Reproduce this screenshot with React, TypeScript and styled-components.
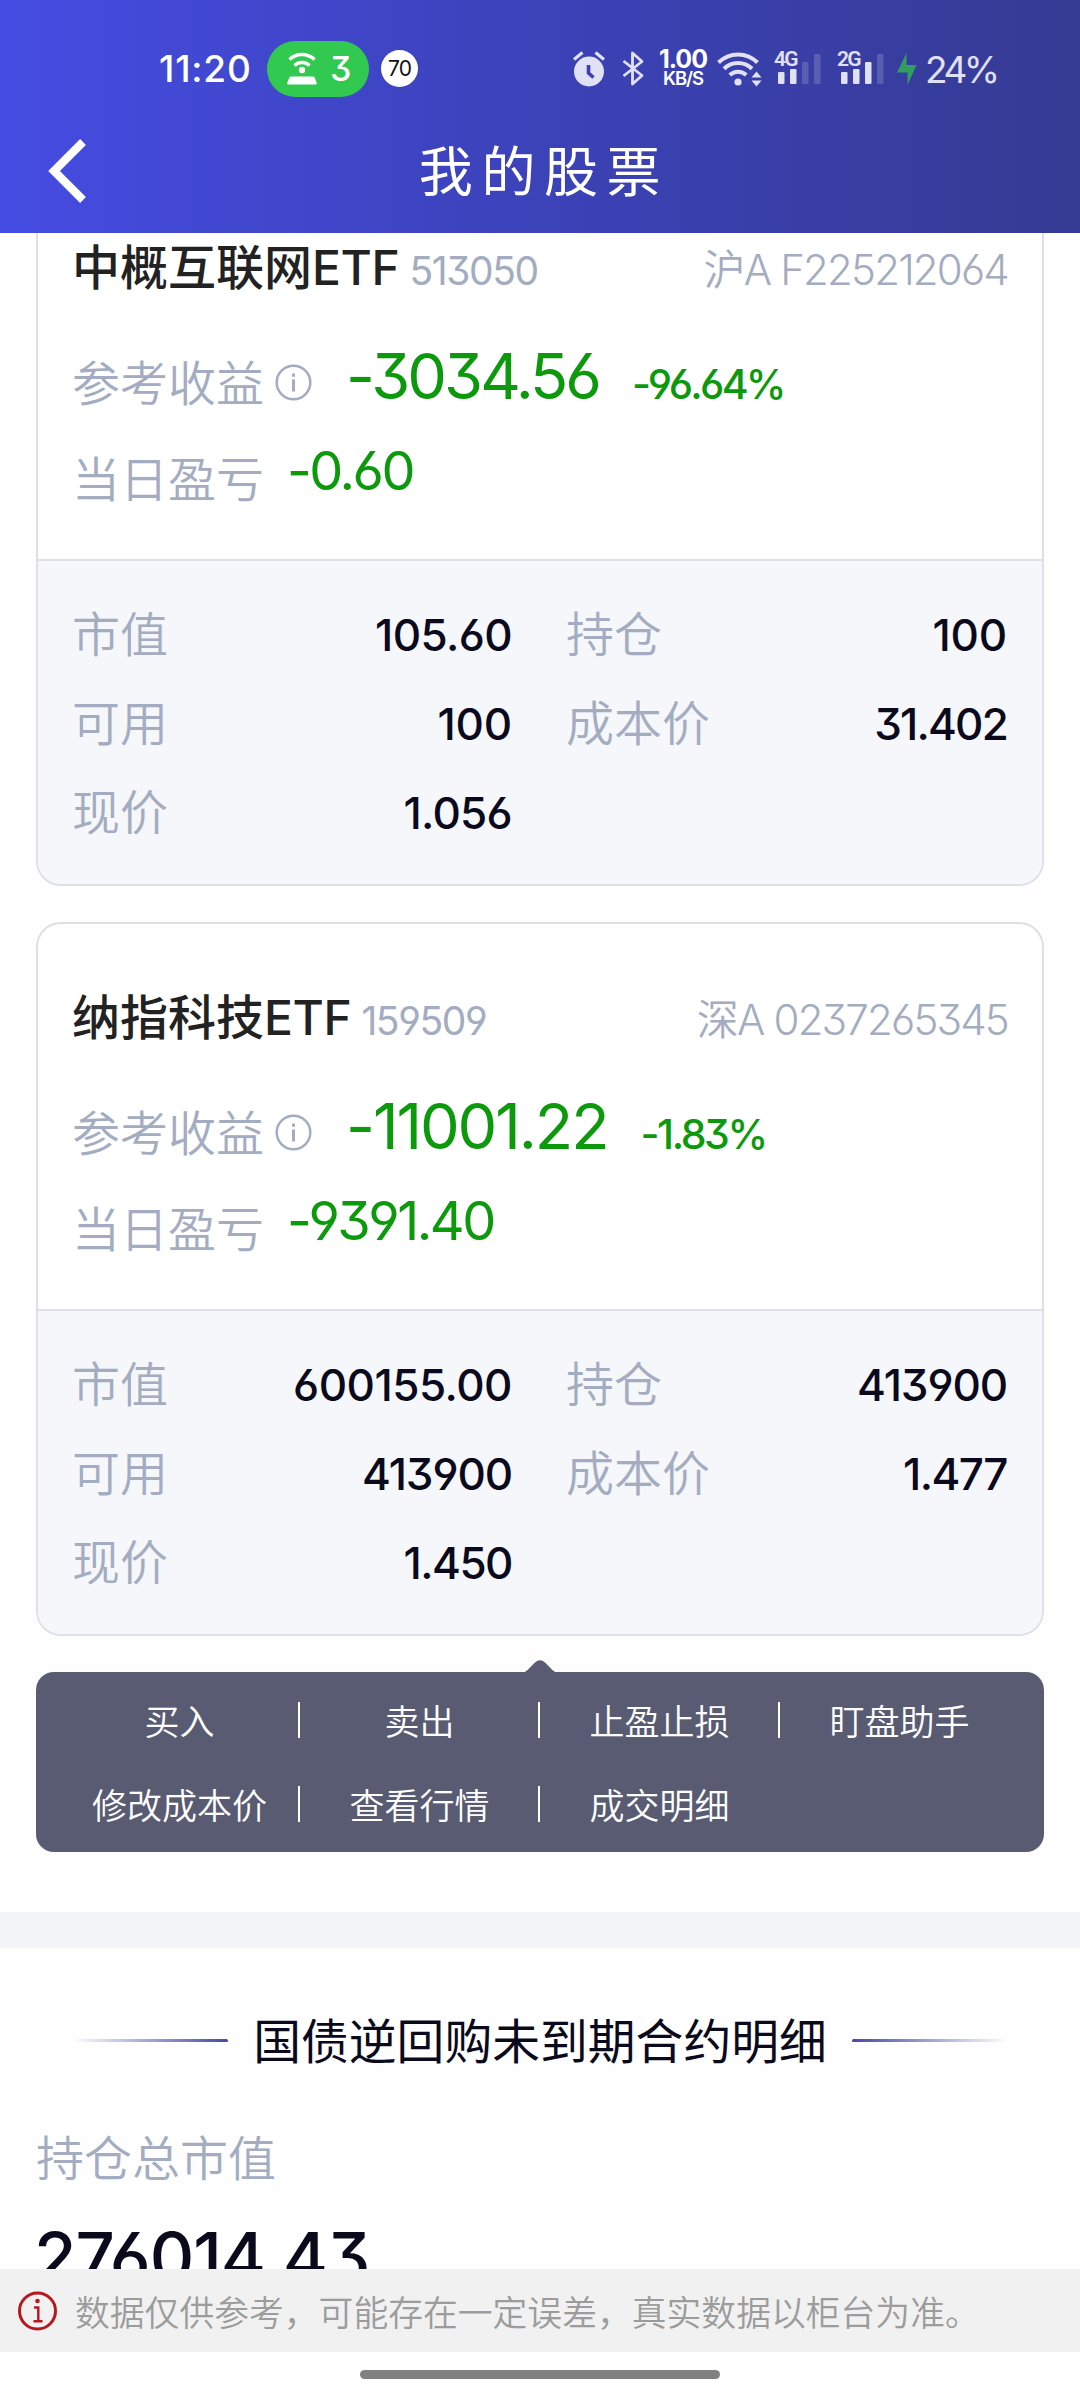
import React from "react";
import styled, { createGlobalStyle } from "styled-components";

const GlobalStyle = createGlobalStyle`
  * { box-sizing: border-box; }
  body { margin: 0; background: #fff; }
`;

const Screen = styled.div`
  width: 1080px;
  height: 2400px;
  display: flex;
  flex-direction: column;
  overflow: hidden;
  background: #fefefe;
  color: #0a0a1c;
  font-family: Inter, "Noto Sans CJK SC", sans-serif;
  font-feature-settings: "cv03", "cv04", "cv09";
  white-space: nowrap;
`;

const Header = styled.header`
  flex: none;
  height: 233px;
  display: flex;
  flex-direction: column;
  background: linear-gradient(90deg, #454ce2 0%, #3c42b8 50%, #353b92 100%);
  color: #fff;
`;

const StatusBar = styled.div`
  height: 137px;
  padding: 0 84px 0 159px;
  display: flex;
  align-items: center;
  justify-content: space-between;
`;

const StatusGroup = styled.div`
  display: flex;
  align-items: center;
  color: #e0e1f5;
`;

const Clock = styled.span`
  width: 108px;
  font-size: 37px;
  font-weight: 500;
  letter-spacing: 0.8px;
  color: #fff;
`;

const HotspotPill = styled.div`
  width: 102px;
  height: 56px;
  border-radius: 28px;
  background: #31c950;
  color: #fff;
  display: flex;
  align-items: center;
  padding-left: 20px;
  gap: 13px;
  font-size: 34px;
  font-weight: 500;
`;

const CountBadge = styled.div`
  width: 37px;
  height: 37px;
  margin-left: 12px;
  border-radius: 50%;
  background: #fff;
  color: #111;
  font-size: 21px;
  letter-spacing: -1px;
  display: flex;
  align-items: center;
  justify-content: center;
`;

const Speed = styled.div`
  width: 50px;
  margin: 0 9px 0 14px;
  color: #fff;
  display: flex;
  flex-direction: column;
  align-items: center;
`;

const SpeedValue = styled.span`
  font-size: 25px;
  font-weight: 650;
  line-height: 20px;
  letter-spacing: -1px;
`;

const SpeedUnit = styled.span`
  font-size: 18.5px;
  font-weight: 600;
  line-height: 19px;
  letter-spacing: -1.1px;
`;

const SignalBox = styled.div`
  position: relative;
  width: 48px;
  height: 34px;
  margin-left: 15px;

  &:first-of-type {
    margin-left: 13px;
  }
`;

const SignalLabel = styled.span`
  position: absolute;
  left: -1px;
  top: -2px;
  font-size: 21px;
  font-weight: 600;
  line-height: 18px;
  letter-spacing: -1.8px;
  font-family: Roboto, sans-serif;
`;

const BoltIcon = styled.svg`
  margin-left: 11px;
`;

const Battery = styled.span`
  font-size: 37px;
  font-weight: 430;
  line-height: 44px;
  letter-spacing: -3.6px;
  margin-left: 8px;
  width: 71px;
  padding-top: 2px;
`;

const TitleBar = styled.div`
  height: 70px;
  display: grid;
  grid-template-columns: 136px 1fr 136px;
  align-items: center;
`;

const BackButton = styled.button`
  border: 0;
  background: none;
  padding: 0 0 0 48px;
  display: flex;
  margin-top: -4px;
`;

const PageTitle = styled.h1`
  margin: 1px 0 0;
  text-align: center;
  font-weight: 430;
  font-size: 54px;
  line-height: 70px;
  letter-spacing: 8.6px;
  text-indent: 8px;
`;

const Scroller = styled.main`
  height: 2036px;
  flex: none;
  overflow: hidden;
  display: flex;
  flex-direction: column;
`;

const CardList = styled.section`
  flex: none;
  margin-top: -61px;
  padding: 0 36px 60px;
  display: flex;
  flex-direction: column;
  gap: 36px;
`;

const Card = styled.article`
  height: 714px;
  border: 2px solid #dde1e7;
  border-radius: 25px;
  overflow: hidden;
  display: flex;
  flex-direction: column;
  background: #fff;
`;

const Summary = styled.div`
  height: 385px;
  padding: 64px 34px 0;
`;

const NameRow = styled.div`
  display: flex;
  align-items: baseline;
  height: 60px;
  line-height: 60px;
`;

const Name = styled.span`
  font-size: 48px;
  font-weight: 500;
  color: #222;
`;

const Latin = styled.span`
  letter-spacing: -0.4px;
`;

const Code = styled.span`
  font-size: 39px;
  letter-spacing: -1.4px;
  margin-left: 10px;
  color: #a3acc0;
`;

const Account = styled.span`
  margin-left: auto;
  font-size: 42px;
  font-weight: 350;
  letter-spacing: -1.8px;
  color: #a3acc0;
`;

const Row = styled.div<{ $gap: number }>`
  display: flex;
  align-items: flex-start;
  height: 60px;
  line-height: 60px;
  margin-top: ${(p) => p.$gap}px;
`;

const Label = styled.span<{ $drop?: number }>`
  font-size: 48px;
  font-weight: 350;
  color: #a3acc0;
  margin-top: ${(p) => p.$drop ?? 0}px;
`;

const InfoMark = styled.svg`
  flex: none;
  margin: 18px 0 0 11px;
`;

const Figures = styled.div`
  display: flex;
  align-items: baseline;
  color: #0c990c;
`;

const Profit = styled.span<{ $tracking: number }>`
  font-size: 63px;
  font-weight: 430;
  letter-spacing: ${(p) => p.$tracking}px;
  margin-left: 34px;
`;

const Percent = styled.span<{ $tracking: number }>`
  font-size: 41px;
  font-weight: 450;
  letter-spacing: ${(p) => p.$tracking}px;
  margin-left: 33px;
`;

const DayProfit = styled.span`
  font-size: 54px;
  font-weight: 430;
  letter-spacing: -2.5px;
  margin-left: 23px;
  color: #0c990c;
`;

const Details = styled.dl`
  flex: 1;
  margin: 0;
  border-top: 2px solid #dde1e7;
  background: #f5f7fb;
  padding: 29px 34px 0;
  display: grid;
  grid-template-columns: 440px 441px;
  grid-auto-rows: 89px;
  column-gap: 54px;
`;

const Detail = styled.div`
  display: flex;
  justify-content: space-between;
  align-items: center;
`;

const DetailLabel = styled(Label)`
  line-height: 60px;
`;

const DetailValue = styled.dd<{ $tracking: number }>`
  margin: 0;
  font-size: 44px;
  font-weight: 450;
  letter-spacing: ${(p) => p.$tracking}px;
`;

const ActionPanel = styled.nav`
  position: relative;
  height: 180px;
  border-radius: 18px;
  background: #595b72;
  padding: 6px 24px;
  display: grid;
  grid-template-columns: repeat(4, 240px);
  grid-auto-rows: 84px;
`;

const Notch = styled.svg`
  position: absolute;
  left: 486px;
  top: -12px;
`;

const Action = styled.button<{ $divider: boolean }>`
  border: 0;
  padding: 0 1px 2px 0;
  background: linear-gradient(#fff, #fff) no-repeat right 0 center / ${(p) => (p.$divider ? "2px 36px" : "0 0")};
  color: #fff;
  font: inherit;
  font-weight: 350;
  font-size: 35px;
`;

const Band = styled.div`
  flex: none;
  height: 36px;
  background: #f3f4f7;
`;

const SectionTitle = styled.h2`
  margin: 64px 0 0;
  padding: 0 72px;
  height: 60px;
  flex: none;
  display: grid;
  grid-template-columns: 1fr 576px 1fr;
  column-gap: 24px;
  align-items: center;
  font-weight: 400;
  font-size: 47.8px;
  line-height: 60px;
  text-align: center;
`;

const Rule = styled.span<{ $to: string }>`
  height: 3px;
  margin-top: -4px;
  border-radius: 2px;
  background: linear-gradient(to ${(p) => p.$to}, #454aa8, rgba(69, 74, 168, 0));
`;

const Total = styled.div`
  flex: none;
  padding: 57px 36px 0;
  display: flex;
  flex-direction: column;
  line-height: 60px;
`;

const TotalValue = styled.span`
  font-size: 69px;
  font-weight: 450;
  line-height: 80px;
  letter-spacing: -1px;
  margin: 28px 0 0 -2px;
`;

const Notice = styled.footer`
  flex: none;
  height: 83px;
  padding-left: 18px;
  display: flex;
  align-items: center;
  gap: 17px;
  background: #f1f1f1;
  color: #9c9c9c;
  font-size: 34.8px;
  font-weight: 350;
`;

const HomeArea = styled.div`
  flex: 1;
  display: flex;
  justify-content: center;
  padding-top: 18px;
`;

const HomeBar = styled.div`
  width: 360px;
  height: 9px;
  border-radius: 5px;
  background: #808080;
`;

function HotspotIcon() {
  return (
    <svg width="30" height="33" viewBox="0 0 30 33" fill="none">
      <path d="M2.5 7.5a18 18 0 0 1 25 0M7.5 13.5a11 11 0 0 1 15 0" stroke="#fff" strokeWidth="3.4" />
      <circle cx="15" cy="18" r="3.2" fill="#fff" />
      <path d="M4 24.500h22q1.200 0 1.600 1l2.200 5.500q.3 1.500-1.200 1.500H1.400q-1.500 0-1.200-1.500l2.200-5.500q.4-1 1.600-1z" fill="#fff" />
    </svg>
  );
}

const AlarmSvg = styled.svg`
  margin-right: 17px;
`;

function AlarmIcon() {
  return (
    <AlarmSvg width="32" height="36" viewBox="0 0 32 36" fill="none">
      <circle cx="16" cy="20.500" r="15" fill="#e0e1f5" />
      <path d="M1 8.500l8.500-7M31 8.500l-8.500-7" stroke="#e0e1f5" strokeWidth="3.200" />
      <path d="M15.500 14v8l5 4.500" stroke="#3c41b0" strokeWidth="3.600" />
    </AlarmSvg>
  );
}

function BluetoothIcon() {
  return (
    <svg width="22" height="35" viewBox="0 0 22 35" fill="none" stroke="#e0e1f5" strokeWidth="2.800" strokeLinejoin="round">
      <path d="M1.500 10l18.500 14.500-9.500 8.500V2l9.500 8.500L1.500 25" />
    </svg>
  );
}

const WifiSvg = styled.svg`
  margin-right: -2px;
`;

function WifiIcon() {
  return (
    <WifiSvg width="45" height="36" viewBox="0 0 45 36" fill="none">
      <path d="M1.500 11.500a27.500 27.500 0 0 1 39 0M7 17.800a20 20 0 0 1 28 0M12.800 24a11.800 11.800 0 0 1 16.500 0" stroke="#e0e1f5" strokeWidth="4" />
      <circle cx="21" cy="31" r="3.600" fill="#e0e1f5" />
      <path d="M34.500 26.500l5-6 5 6zM34.500 29.500l5 6 5-6z" fill="#e0e1f5" />
    </WifiSvg>
  );
}

function Signal({ label, level }: { label: string; level: number }) {
  const tops = [20, 17, 10, 2];
  return (
    <SignalBox>
      <SignalLabel>{label}</SignalLabel>
      <svg width="48" height="34" viewBox="0 0 48 34">
        {tops.map((top, i) => (
          <rect
            key={i}
            x={3 + i * 12}
            y={top}
            width="6.500"
            height={32 - top}
            rx="1.200"
            fill="#e0e1f5"
            opacity={i < level ? 1 : 0.2}
          />
        ))}
      </svg>
    </SignalBox>
  );
}

type Figure = { text: string; tracking: number };

type Holding = {
  name: string;
  code: string;
  market: string;
  account: string;
  profit: Figure;
  percent: Figure;
  day: string;
  details: [string, Figure][];
};

const fig = (text: string, tracking = -0.6): Figure => ({ text, tracking });

const holdings: Holding[] = [
  {
    name: "中概互联网",
    code: "513050",
    market: "沪",
    account: "A F225212064",
    profit: fig("-3034.56", -3),
    percent: fig("-96.64%", -2.7),
    day: "-0.60",
    details: [
      ["市值", fig("105.60")],
      ["持仓", fig("100", -0.2)],
      ["可用", fig("100", -0.2)],
      ["成本价", fig("31.402", -1.8)],
      ["现价", fig("1.056", -0.7)],
    ],
  },
  {
    name: "纳指科技",
    code: "159509",
    market: "深",
    account: "A 0237265345",
    profit: fig("-11001.22", -2.1),
    percent: fig("-1.83%", -2.4),
    day: "-9391.40",
    details: [
      ["市值", fig("600155.00", -0.5)],
      ["持仓", fig("413900", -1.1)],
      ["可用", fig("413900", -1.1)],
      ["成本价", fig("1.477", -1.5)],
      ["现价", fig("1.450", -1.5)],
    ],
  },
];

const actions = ["买入", "卖出", "止盈止损", "盯盘助手", "修改成本价", "查看行情", "成交明细"];

function HoldingCard({ item }: { item: Holding }) {
  return (
    <Card>
      <Summary>
        <NameRow>
          <Name>
            {item.name}
            <Latin>ETF</Latin>
          </Name>
          <Code>{item.code}</Code>
          <Account>
            {item.market}
            {item.account}
          </Account>
        </NameRow>
        <Row $gap={48}>
          <Label $drop={8}>参考收益</Label>
          <InfoMark width="37" height="37" viewBox="0 0 37 37" fill="none" stroke="#a3acc0">
            <circle cx="18.500" cy="18.500" r="16.800" strokeWidth="2.500" />
            <path d="M18.500 15.500v12M18.500 9.500v3.200" strokeWidth="3" />
          </InfoMark>
          <Figures>
            <Profit $tracking={item.profit.tracking}>{item.profit.text}</Profit>
            <Percent $tracking={item.percent.tracking}>{item.percent.text}</Percent>
          </Figures>
        </Row>
        <Row $gap={35}>
          <Label $drop={9}>当日盈亏</Label>
          <DayProfit>{item.day}</DayProfit>
        </Row>
      </Summary>
      <Details>
        {item.details.map(([label, value]) => (
          <Detail key={label}>
            <DetailLabel as="dt">{label}</DetailLabel>
            <DetailValue $tracking={value.tracking}>{value.text}</DetailValue>
          </Detail>
        ))}
      </Details>
    </Card>
  );
}

export default function App() {
  return (
    <Screen>
      <GlobalStyle />
      <Header>
        <StatusBar>
          <StatusGroup>
            <Clock>11:20</Clock>
            <HotspotPill>
              <HotspotIcon />3
            </HotspotPill>
            <CountBadge>70</CountBadge>
          </StatusGroup>
          <StatusGroup>
            <AlarmIcon />
            <BluetoothIcon />
            <Speed>
              <SpeedValue>1.00</SpeedValue>
              <SpeedUnit>KB/S</SpeedUnit>
            </Speed>
            <WifiIcon />
            <Signal label="4G" level={2} />
            <Signal label="2G" level={3} />
            <BoltIcon width="20" height="32" viewBox="0 0 20 32">
              <path d="M9.500 0v12H19.500L10.500 32V19.500H0z" fill="#2f9e5e" />
            </BoltIcon>
            <Battery>24%</Battery>
          </StatusGroup>
        </StatusBar>
        <TitleBar>
          <BackButton aria-label="返回">
            <svg width="40" height="64" viewBox="0 0 40 64" fill="none">
              <path d="M35 3L6 32l29 29" stroke="#fff" strokeWidth="8.200" />
            </svg>
          </BackButton>
          <PageTitle>我的股票</PageTitle>
        </TitleBar>
      </Header>
      <Scroller>
        <CardList>
          {holdings.map((h) => (
            <HoldingCard key={h.code} item={h} />
          ))}
          <ActionPanel>
            <Notch width="36" height="13" viewBox="0 0 36 13">
              <path d="M0 13C5 12 9 6 13 2.500Q18-2 23 2.500C27 6 31 12 36 13z" fill="#595b72" />
            </Notch>
            {actions.map((a, i) => (
              <Action key={a} $divider={i !== 3 && i !== 6}>
                {a}
              </Action>
            ))}
          </ActionPanel>
        </CardList>
        <Band />
        <SectionTitle>
          <Rule $to="left" />
          国债逆回购未到期合约明细
          <Rule $to="right" />
        </SectionTitle>
        <Total>
          <Label>持仓总市值</Label>
          <TotalValue>276014.43</TotalValue>
        </Total>
      </Scroller>
      <Notice>
        <svg width="40" height="40" viewBox="0 0 40 40" fill="none">
          <circle cx="19.500" cy="20" r="18" stroke="#b5191f" strokeWidth="3" />
          <circle cx="19.500" cy="10" r="2.300" fill="#b5191f" />
          <path d="M16 16.500h4.300v13.500M15.500 30.300h9" stroke="#b5191f" strokeWidth="2.400" />
        </svg>
        数据仅供参考，可能存在一定误差，真实数据以柜台为准。
      </Notice>
      <HomeArea>
        <HomeBar />
      </HomeArea>
    </Screen>
  );
}
